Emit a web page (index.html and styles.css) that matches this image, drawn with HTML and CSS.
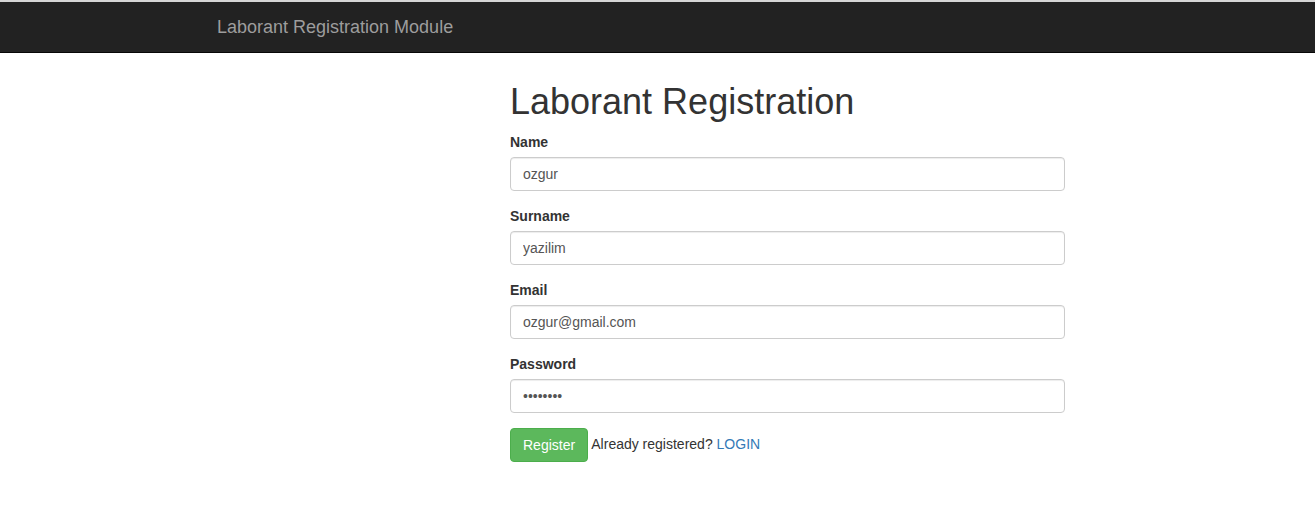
FILE: index.html
```html
<!DOCTYPE html>
<html lang="en">
<head>
    <meta charset="UTF-8">
    <meta name="viewport" content="width=device-width, initial-scale=1.0">
    <title>Laborant Registration</title>
    <link rel="stylesheet" href="styles.css">
</head>
<body>
    <nav class="navbar">
        <div class="navbar-inner">
            <a class="navbar-brand" href="#">Laborant Registration Module</a>
        </div>
    </nav>

    <div class="container">
        <div class="form-col">
            <h1>Laborant Registration</h1>
            <form>
                <div class="form-group">
                    <label for="name">Name</label>
                    <input type="text" id="name" class="form-control" value="ozgur">
                </div>
                <div class="form-group">
                    <label for="surname">Surname</label>
                    <input type="text" id="surname" class="form-control" value="yazilim">
                </div>
                <div class="form-group">
                    <label for="email">Email</label>
                    <input type="email" id="email" class="form-control" value="ozgur@gmail.com">
                </div>
                <div class="form-group">
                    <label for="password">Password</label>
                    <input type="password" id="password" class="form-control" value="12345678">
                </div>
                <button type="submit" class="btn btn-success">Register</button>
                <span class="login-note">Already registered? <a href="#">LOGIN</a></span>
            </form>
        </div>
    </div>
</body>
</html>
```

FILE: styles.css
```css
/* Reset */
* {
    box-sizing: border-box;
}

html, body {
    margin: 0;
    padding: 0;
}

body {
    font-family: "Liberation Sans", Arial, Helvetica, sans-serif;
    font-size: 14px;
    line-height: 1.42857143;
    color: #333;
    background: #fff;
    border-top: 2px solid #d6d6d6;
}

/* Navbar */
.navbar {
    background-color: #222;
    border-bottom: 1px solid #080808;
    height: 51px;
}

.navbar-inner {
    padding-left: 202px;
}

.navbar-brand {
    display: inline-block;
    height: 50px;
    padding: 15px;
    font-size: 18px;
    line-height: 20px;
    color: #9d9d9d;
    text-decoration: none;
}

/* Main Content */
.container {
    padding-left: 510px;
    padding-top: 29px;
}

.form-col {
    width: 555px;
}

h1 {
    margin: 0 0 10px;
    font-size: 36px;
    font-weight: 500;
    line-height: 1.1;
    color: #333;
}

.form-group {
    margin-bottom: 15px;
}

label {
    display: inline-block;
    margin-bottom: 5px;
    font-weight: bold;
}

.form-control {
    display: block;
    width: 100%;
    height: 34px;
    padding: 6px 12px;
    font-family: inherit;
    font-size: 14px;
    line-height: 1.42857143;
    color: #555;
    background-color: #fff;
    border: 1px solid #ccc;
    border-radius: 4px;
    box-shadow: inset 0 1px 1px rgba(0, 0, 0, 0.075);
}

.btn {
    display: inline-block;
    padding: 6px 12px;
    font-family: inherit;
    font-size: 14px;
    line-height: 1.42857143;
    border: 1px solid transparent;
    border-radius: 4px;
    cursor: pointer;
    vertical-align: middle;
}

.btn-success {
    color: #fff;
    background-color: #5cb85c;
    border-color: #4cae4c;
}

.login-note a {
    color: #337ab7;
    text-decoration: none;
}
```
